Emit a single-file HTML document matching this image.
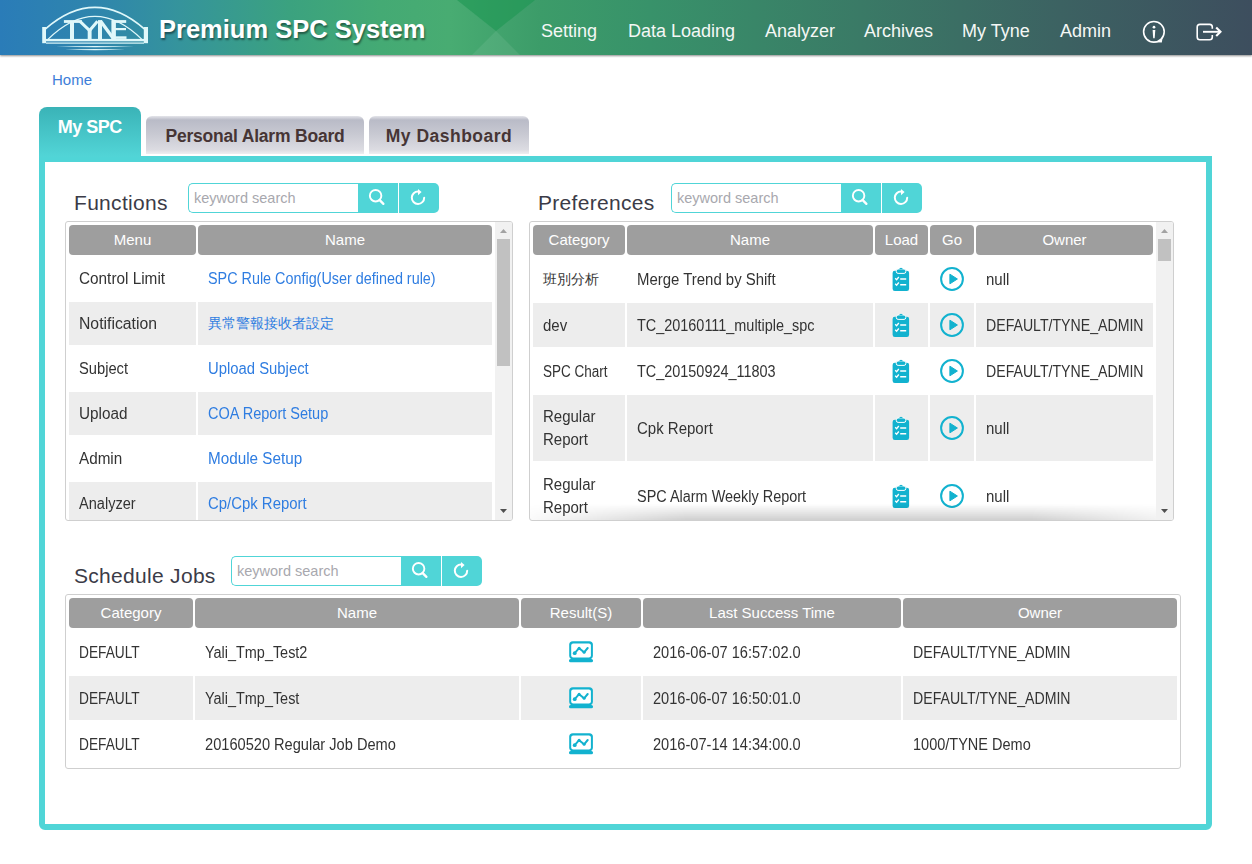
<!DOCTYPE html>
<html><head><meta charset="utf-8">
<style>
*{box-sizing:border-box;margin:0;padding:0}
html,body{width:1252px;height:864px;overflow:hidden;background:#fff;font-family:"Liberation Sans",sans-serif;color:#333}
.abs{position:absolute}
#hdr{position:absolute;left:0;top:0;width:1252px;height:55px;
 background:linear-gradient(90deg,#2a7cb8 0px,#2f86ac 100px,#35949c 180px,#3ba27f 290px,#44aa74 380px,#48ac72 450px,#3c9c69 540px,#38926a 650px,#3a7a66 860px,#3c6262 1060px,#3d4e5e 1252px);
 box-shadow:0 1px 2px rgba(0,0,0,.45)}
.nav{position:absolute;top:20px;font-size:18px;line-height:22px;color:#f4f7f5;white-space:nowrap}
.title{position:absolute;left:159px;top:14px;font-size:25.5px;font-weight:bold;line-height:30px;color:#fff;white-space:nowrap;text-shadow:1px 2px 2px rgba(0,0,0,.45)}
.home{position:absolute;left:52px;top:70px;font-size:15px;line-height:20px;color:#3d7ed8}
.tab1{position:absolute;left:39px;top:107px;width:102px;height:50px;border-radius:8px 8px 0 0;
 background:linear-gradient(180deg,#3ab3b7 0%,#52d5d7 100%);color:#fff;font-weight:bold;font-size:18px;line-height:20px;text-align:center;padding-top:10px;letter-spacing:-.5px;text-indent:-.5px}
.tab2{position:absolute;top:116px;height:38px;border-radius:6px 6px 0 0;
 background:linear-gradient(180deg,#e4e5ea 0px,#b9bbc7 4px,#c8c9d2 18px,#dcdce2 34px,#eeeef1 38px);color:#463535;font-weight:bold;font-size:17.5px;line-height:20px;text-align:center;padding-top:10px;white-space:nowrap;letter-spacing:-.2px}
.frame{position:absolute;left:39px;top:156px;width:1173px;height:674px;border:6px solid #50d5d7;border-radius:0 0 6px 6px}
.sect{position:absolute;font-size:21px;line-height:24px;color:#3b3b47;white-space:nowrap;letter-spacing:.3px}
.sbox{position:absolute;height:30px}
.sbox .inp{position:absolute;left:0;top:0;width:171px;height:30px;border:1px solid #50d5d7;border-right:none;border-radius:5px 0 0 5px;background:#fff;
 font-size:14.5px;line-height:28px;color:#a8a8ae;padding-left:5px;white-space:nowrap}
.sbox .b1{position:absolute;left:170px;top:0;width:40px;height:30px;background:#50d5d7}
.sbox .b2{position:absolute;left:211px;top:0;width:40px;height:30px;background:#50d5d7;border-radius:0 5px 5px 0}
.box{position:absolute;border:1px solid #cfcfcf;border-radius:3px;overflow:hidden;background:#fff}
.th{position:absolute;background:#9e9e9e;border-radius:4px;color:#fff;font-size:15px;line-height:30px;height:30px;text-align:center;white-space:nowrap}
.td{position:absolute;font-size:16px;line-height:23px;color:#333;white-space:nowrap;padding-left:10px;display:flex;align-items:center}
.g{background:#ededed}
.lnk{color:#2f7de1}
.sx{display:inline-block;transform-origin:0 50%}
.track{position:absolute;background:#f1f1f1;width:17px}
.thumb{position:absolute;background:#c1c1c1;width:13px;left:2px}
</style></head><body>
<div id="hdr">
 <svg class="abs" style="left:0;top:0" width="1252" height="55">
  <polygon points="457,0 535,0 496,31" fill="#1a9550" fill-opacity=".55"/>
  <polygon points="496,31 472,55 520,55" fill="#ffffff" fill-opacity=".08"/>
  <g fill="#e0f8fa" stroke="none">
   <path d="M45.5,28.8 Q94.9,-14.2 144.3,28.8" fill="none" stroke="#e0f8fa" stroke-width="1.7"/>
   <path d="M47.9,39.4 Q94.9,-6.6 141.9,39.4" fill="none" stroke="#e0f8fa" stroke-width="1.2"/>
   <rect x="42.2" y="27" width="3.8" height="16.2"/>
   <rect x="143.8" y="27" width="4.2" height="16.2"/>
   <rect x="46" y="38.9" width="98" height="2.4"/>
   <rect x="46" y="42.5" width="98" height="1.2"/>
   <path d="M56,46.6 Q95,45.4 134,46.6 Q95,48 56,46.6Z"/>
   <path d="M65,49.5 Q95,48.4 125,49.5 Q95,50.8 65,49.5Z"/>
   <rect x="63.9" y="20.1" width="18" height="2.8"/>
   <rect x="70" y="22" width="4" height="17"/>
   <path d="M80,21.3 L89.6,30.5 L97.5,21.3" fill="none" stroke="#e0f8fa" stroke-width="3"/>
   <rect x="87.7" y="29.6" width="3.9" height="9.5"/>
   <rect x="98" y="20.1" width="4" height="19"/>
   <path d="M100.5,21 L113,38" fill="none" stroke="#e0f8fa" stroke-width="3.3"/>
   <rect x="111.4" y="20.1" width="4.5" height="19"/>
   <rect x="112" y="20.1" width="14.2" height="2.8"/>
   <rect x="112" y="28" width="14" height="2.2"/>
   <rect x="112" y="36.3" width="14.5" height="2.6"/>
  </g>
  <g fill="none" stroke="#fff" stroke-width="1.6">
   <circle cx="1153.9" cy="31.8" r="10.3"/>
   <path d="M1212.3,28.8 V27.1 Q1212.3,24.4 1209.6,24.4 H1199.9 Q1197.2,24.4 1197.2,27.1 V37 Q1197.2,39.7 1199.9,39.7 H1209.6 Q1212.3,39.7 1212.3,37 V35"/>
   <path d="M1203,31.8 H1219.8" stroke-width="1.9"/>
   <path d="M1216.2,27.5 L1220.5,31.8 L1216.2,36.1" stroke-width="2.1"/>
  </g>
  <g fill="#fff">
   <circle cx="1154" cy="27.2" r="1.35"/>
   <path d="M1152.6,30 H1155.3 L1154.7,38.3 H1153.2Z"/>
   <path d="M1154.5,42.2 Q1160,41.5 1162.6,37.8 L1161.8,42.6 Z"/>
  </g>
 </svg>
 <div class="title">Premium SPC System</div>
 <div class="nav" style="left:541px">Setting</div>
 <div class="nav" style="left:628px">Data Loading</div>
 <div class="nav" style="left:765px">Analyzer</div>
 <div class="nav" style="left:864px">Archives</div>
 <div class="nav" style="left:962px">My Tyne</div>
 <div class="nav" style="left:1060px">Admin</div>
</div>
<div class="home">Home</div>
<div class="frame"></div>
<div class="tab1">My SPC</div>
<div class="tab2" style="left:146px;width:218px">Personal Alarm Board</div>
<div class="tab2" style="left:369px;width:160px;letter-spacing:.5px">My Dashboard</div>
<div class="sect" style="left:74px;top:191px">Functions</div>
<div class="sbox" style="left:188px;top:183px">
 <div class="inp">keyword search</div><div class="b1"></div><div class="b2"></div>
 <svg class="abs" style="left:170px;top:0" width="81" height="30" viewBox="0 0 81 30">
  <circle cx="17.6" cy="12.7" r="5.75" fill="none" stroke="#fff" stroke-width="1.9"/>
  <path d="M21.7,17.1 L25.4,20.9" stroke="#fff" stroke-width="2.3" stroke-linecap="round"/>
  <path d="M66.2,14.7 A6.2,6.2 0 1 1 60.2,8.5" fill="none" stroke="#fff" stroke-width="2" stroke-linecap="round"/>
  <path d="M60,5.9 L63.6,9.1 L60,12.2Z" fill="#fff"/>
 </svg>
</div>
<div class="box" style="left:65px;top:221px;width:448px;height:300px">
<div class="th" style="left:3px;top:3px;width:127px">Menu</div>
<div class="th" style="left:132px;top:3px;width:294px">Name</div>
<div class="td" style="left:3px;top:35px;width:127px;height:43px"><span class="sx" style="transform:scaleX(0.9581)">Control Limit</span></div>
<div class="td" style="left:132px;top:35px;width:294px;height:43px"><span class="lnk"><span class="sx" style="transform:scaleX(0.8981)">SPC Rule Config(User defined rule)</span></span></div>
<div class="td g" style="left:3px;top:80px;width:127px;height:43px"><span class="sx" style="transform:scaleX(0.9844)">Notification</span></div>
<div class="td g" style="left:132px;top:80px;width:294px;height:43px"><span class="lnk" style="font-size:14px">異常警報接收者設定</span></div>
<div class="td" style="left:3px;top:125px;width:127px;height:43px"><span class="sx" style="transform:scaleX(0.9187)">Subject</span></div>
<div class="td" style="left:132px;top:125px;width:294px;height:43px"><span class="lnk"><span class="sx" style="transform:scaleX(0.9281)">Upload Subject</span></span></div>
<div class="td g" style="left:3px;top:170px;width:127px;height:43px"><span class="sx" style="transform:scaleX(0.9563)">Upload</span></div>
<div class="td g" style="left:132px;top:170px;width:294px;height:43px"><span class="lnk"><span class="sx" style="transform:scaleX(0.9075)">COA Report Setup</span></span></div>
<div class="td" style="left:3px;top:215px;width:127px;height:43px"><span class="sx" style="transform:scaleX(0.9534)">Admin</span></div>
<div class="td" style="left:132px;top:215px;width:294px;height:43px"><span class="lnk"><span class="sx" style="transform:scaleX(0.9544)">Module Setup</span></span></div>
<div class="td g" style="left:3px;top:260px;width:127px;height:43px"><span class="sx" style="transform:scaleX(0.9103)">Analyzer</span></div>
<div class="td g" style="left:132px;top:260px;width:294px;height:43px"><span class="lnk"><span class="sx" style="transform:scaleX(0.9319)">Cp/Cpk Report</span></span></div>
<div class="track" style="left:429px;top:0;height:298px"></div>
<div class="thumb" style="left:431px;top:17px;height:127px"></div>
<svg class="abs" style="left:429px;top:0" width="17" height="298"><path d="M5,11 H12 L8.5,7Z" fill="#a3a3a3"/><path d="M5,287 H12 L8.5,291Z" fill="#505050"/></svg>
</div>
<div class="sect" style="left:538px;top:191px">Preferences</div>
<div class="sbox" style="left:671px;top:183px">
 <div class="inp">keyword search</div><div class="b1"></div><div class="b2"></div>
 <svg class="abs" style="left:170px;top:0" width="81" height="30" viewBox="0 0 81 30">
  <circle cx="17.6" cy="12.7" r="5.75" fill="none" stroke="#fff" stroke-width="1.9"/>
  <path d="M21.7,17.1 L25.4,20.9" stroke="#fff" stroke-width="2.3" stroke-linecap="round"/>
  <path d="M66.2,14.7 A6.2,6.2 0 1 1 60.2,8.5" fill="none" stroke="#fff" stroke-width="2" stroke-linecap="round"/>
  <path d="M60,5.9 L63.6,9.1 L60,12.2Z" fill="#fff"/>
 </svg>
</div>
<div class="box" style="left:529px;top:221px;width:645px;height:300px">
<div class="th" style="left:3px;top:3px;width:92px">Category</div>
<div class="th" style="left:97px;top:3px;width:246px">Name</div>
<div class="th" style="left:345px;top:3px;width:53px">Load</div>
<div class="th" style="left:400px;top:3px;width:44px">Go</div>
<div class="th" style="left:446px;top:3px;width:177px">Owner</div>
<div class="td" style="left:3px;top:35px;width:92px;height:44px"><span style="font-size:14px">班別分析</span></div>
<div class="td" style="left:97px;top:35px;width:246px;height:44px"><span class="sx" style="transform:scaleX(0.9337)">Merge Trend by Shift</span></div>
<div class="td" style="left:345px;top:35px;width:53px;height:44px"></div>
<div class="td" style="left:400px;top:35px;width:44px;height:44px"></div>
<div class="td" style="left:446px;top:35px;width:177px;height:44px"><span class="sx" style="transform:scaleX(0.9375)">null</span></div>
<div class="td g" style="left:3px;top:81px;width:92px;height:44px"><span class="sx" style="transform:scaleX(0.9375)">dev</span></div>
<div class="td g" style="left:97px;top:81px;width:246px;height:44px"><span class="sx" style="transform:scaleX(0.9019)">TC_20160111_multiple_spc</span></div>
<div class="td g" style="left:345px;top:81px;width:53px;height:44px"></div>
<div class="td g" style="left:400px;top:81px;width:44px;height:44px"></div>
<div class="td g" style="left:446px;top:81px;width:177px;height:44px"><span class="sx" style="transform:scaleX(0.8831)">DEFAULT/TYNE_ADMIN</span></div>
<div class="td" style="left:3px;top:127px;width:92px;height:44px"><span class="sx" style="transform:scaleX(0.8447)">SPC Chart</span></div>
<div class="td" style="left:97px;top:127px;width:246px;height:44px"><span class="sx" style="transform:scaleX(0.9019)">TC_20150924_11803</span></div>
<div class="td" style="left:345px;top:127px;width:53px;height:44px"></div>
<div class="td" style="left:400px;top:127px;width:44px;height:44px"></div>
<div class="td" style="left:446px;top:127px;width:177px;height:44px"><span class="sx" style="transform:scaleX(0.8831)">DEFAULT/TYNE_ADMIN</span></div>
<div class="td g" style="left:3px;top:173px;width:92px;height:66px"><span class="sx" style="transform:scaleX(0.9375)">Regular<br>Report</span></div>
<div class="td g" style="left:97px;top:173px;width:246px;height:66px"><span class="sx" style="transform:scaleX(0.9375)">Cpk Report</span></div>
<div class="td g" style="left:345px;top:173px;width:53px;height:66px"></div>
<div class="td g" style="left:400px;top:173px;width:44px;height:66px"></div>
<div class="td g" style="left:446px;top:173px;width:177px;height:66px"><span class="sx" style="transform:scaleX(0.9375)">null</span></div>
<div class="td" style="left:3px;top:241px;width:92px;height:66px"><span class="sx" style="transform:scaleX(0.9375)">Regular<br>Report</span></div>
<div class="td" style="left:97px;top:241px;width:246px;height:66px"><span class="sx" style="transform:scaleX(0.9028)">SPC Alarm Weekly Report</span></div>
<div class="td" style="left:345px;top:241px;width:53px;height:66px"></div>
<div class="td" style="left:400px;top:241px;width:44px;height:66px"></div>
<div class="td" style="left:446px;top:241px;width:177px;height:66px"><span class="sx" style="transform:scaleX(0.9375)">null</span></div>
<div class="track" style="left:626px;top:0;height:298px"></div>
<div class="thumb" style="left:628px;top:17px;height:22px"></div>
<svg class="abs" style="left:626px;top:0" width="17" height="298"><path d="M5,11 H12 L8.5,7Z" fill="#a3a3a3"/><path d="M5,287 H12 L8.5,291Z" fill="#505050"/></svg>
</div>
<svg class="abs" style="left:892px;top:266.0px" width="18" height="26" viewBox="0 0 18 26">
<rect x="0.6" y="4.8" width="16.5" height="20.1" rx="2.2" fill="#12b2cf"/>
<rect x="4.3" y="3" width="9.5" height="4.4" rx="1.8" fill="#12b2cf" stroke="#fff" stroke-width="1"/>
<path d="M6.8,3.2 Q9,0.2 11.2,3.2Z" fill="#12b2cf"/>
<path d="M3.2,12.3 L4.6,13.7 L6.8,11 M3.2,17.8 L4.6,19.2 L6.8,16.5" fill="none" stroke="#fff" stroke-width="1.3"/>
<path d="M8.2,13.1 H14.2 M8.2,18.8 H14.2" fill="none" stroke="#fff" stroke-width="1.5"/>
</svg>
<svg class="abs" style="left:939px;top:266.0px" width="26" height="26" viewBox="0 0 26 26">
<circle cx="13" cy="13" r="10.9" fill="none" stroke="#12b2cf" stroke-width="2"/>
<path d="M10.9,8.2 L10.9,17.8 L18.4,13Z" fill="#12b2cf" stroke="#12b2cf" stroke-width="1" stroke-linejoin="round"/>
</svg>
<svg class="abs" style="left:892px;top:312.0px" width="18" height="26" viewBox="0 0 18 26">
<rect x="0.6" y="4.8" width="16.5" height="20.1" rx="2.2" fill="#12b2cf"/>
<rect x="4.3" y="3" width="9.5" height="4.4" rx="1.8" fill="#12b2cf" stroke="#fff" stroke-width="1"/>
<path d="M6.8,3.2 Q9,0.2 11.2,3.2Z" fill="#12b2cf"/>
<path d="M3.2,12.3 L4.6,13.7 L6.8,11 M3.2,17.8 L4.6,19.2 L6.8,16.5" fill="none" stroke="#fff" stroke-width="1.3"/>
<path d="M8.2,13.1 H14.2 M8.2,18.8 H14.2" fill="none" stroke="#fff" stroke-width="1.5"/>
</svg>
<svg class="abs" style="left:939px;top:312.0px" width="26" height="26" viewBox="0 0 26 26">
<circle cx="13" cy="13" r="10.9" fill="none" stroke="#12b2cf" stroke-width="2"/>
<path d="M10.9,8.2 L10.9,17.8 L18.4,13Z" fill="#12b2cf" stroke="#12b2cf" stroke-width="1" stroke-linejoin="round"/>
</svg>
<svg class="abs" style="left:892px;top:358.0px" width="18" height="26" viewBox="0 0 18 26">
<rect x="0.6" y="4.8" width="16.5" height="20.1" rx="2.2" fill="#12b2cf"/>
<rect x="4.3" y="3" width="9.5" height="4.4" rx="1.8" fill="#12b2cf" stroke="#fff" stroke-width="1"/>
<path d="M6.8,3.2 Q9,0.2 11.2,3.2Z" fill="#12b2cf"/>
<path d="M3.2,12.3 L4.6,13.7 L6.8,11 M3.2,17.8 L4.6,19.2 L6.8,16.5" fill="none" stroke="#fff" stroke-width="1.3"/>
<path d="M8.2,13.1 H14.2 M8.2,18.8 H14.2" fill="none" stroke="#fff" stroke-width="1.5"/>
</svg>
<svg class="abs" style="left:939px;top:358.0px" width="26" height="26" viewBox="0 0 26 26">
<circle cx="13" cy="13" r="10.9" fill="none" stroke="#12b2cf" stroke-width="2"/>
<path d="M10.9,8.2 L10.9,17.8 L18.4,13Z" fill="#12b2cf" stroke="#12b2cf" stroke-width="1" stroke-linejoin="round"/>
</svg>
<svg class="abs" style="left:892px;top:415.0px" width="18" height="26" viewBox="0 0 18 26">
<rect x="0.6" y="4.8" width="16.5" height="20.1" rx="2.2" fill="#12b2cf"/>
<rect x="4.3" y="3" width="9.5" height="4.4" rx="1.8" fill="#12b2cf" stroke="#fff" stroke-width="1"/>
<path d="M6.8,3.2 Q9,0.2 11.2,3.2Z" fill="#12b2cf"/>
<path d="M3.2,12.3 L4.6,13.7 L6.8,11 M3.2,17.8 L4.6,19.2 L6.8,16.5" fill="none" stroke="#fff" stroke-width="1.3"/>
<path d="M8.2,13.1 H14.2 M8.2,18.8 H14.2" fill="none" stroke="#fff" stroke-width="1.5"/>
</svg>
<svg class="abs" style="left:939px;top:415.0px" width="26" height="26" viewBox="0 0 26 26">
<circle cx="13" cy="13" r="10.9" fill="none" stroke="#12b2cf" stroke-width="2"/>
<path d="M10.9,8.2 L10.9,17.8 L18.4,13Z" fill="#12b2cf" stroke="#12b2cf" stroke-width="1" stroke-linejoin="round"/>
</svg>
<svg class="abs" style="left:892px;top:483.0px" width="18" height="26" viewBox="0 0 18 26">
<rect x="0.6" y="4.8" width="16.5" height="20.1" rx="2.2" fill="#12b2cf"/>
<rect x="4.3" y="3" width="9.5" height="4.4" rx="1.8" fill="#12b2cf" stroke="#fff" stroke-width="1"/>
<path d="M6.8,3.2 Q9,0.2 11.2,3.2Z" fill="#12b2cf"/>
<path d="M3.2,12.3 L4.6,13.7 L6.8,11 M3.2,17.8 L4.6,19.2 L6.8,16.5" fill="none" stroke="#fff" stroke-width="1.3"/>
<path d="M8.2,13.1 H14.2 M8.2,18.8 H14.2" fill="none" stroke="#fff" stroke-width="1.5"/>
</svg>
<svg class="abs" style="left:939px;top:483.0px" width="26" height="26" viewBox="0 0 26 26">
<circle cx="13" cy="13" r="10.9" fill="none" stroke="#12b2cf" stroke-width="2"/>
<path d="M10.9,8.2 L10.9,17.8 L18.4,13Z" fill="#12b2cf" stroke="#12b2cf" stroke-width="1" stroke-linejoin="round"/>
</svg>
<div class="abs" style="left:530px;top:504px;width:626px;height:16px;background:linear-gradient(180deg,rgba(0,0,0,0),rgba(0,0,0,.19));-webkit-mask-image:linear-gradient(90deg,rgba(0,0,0,.1),#000 25%,#000 80%,rgba(0,0,0,.3))"></div>
<div class="sect" style="left:74px;top:564px">Schedule Jobs</div>
<div class="sbox" style="left:231px;top:556px">
 <div class="inp">keyword search</div><div class="b1"></div><div class="b2"></div>
 <svg class="abs" style="left:170px;top:0" width="81" height="30" viewBox="0 0 81 30">
  <circle cx="17.6" cy="12.7" r="5.75" fill="none" stroke="#fff" stroke-width="1.9"/>
  <path d="M21.7,17.1 L25.4,20.9" stroke="#fff" stroke-width="2.3" stroke-linecap="round"/>
  <path d="M66.2,14.7 A6.2,6.2 0 1 1 60.2,8.5" fill="none" stroke="#fff" stroke-width="2" stroke-linecap="round"/>
  <path d="M60,5.9 L63.6,9.1 L60,12.2Z" fill="#fff"/>
 </svg>
</div>
<div class="box" style="left:65px;top:594px;width:1116px;height:175px">
<div class="th" style="left:3px;top:3px;width:124px">Category</div>
<div class="th" style="left:129px;top:3px;width:324px">Name</div>
<div class="th" style="left:455px;top:3px;width:120px">Result(S)</div>
<div class="th" style="left:577px;top:3px;width:258px">Last Success Time</div>
<div class="th" style="left:837px;top:3px;width:274px">Owner</div>
<div class="td" style="left:3px;top:35px;width:124px;height:44px"><span class="sx" style="transform:scaleX(0.8569)">DEFAULT</span></div>
<div class="td" style="left:129px;top:35px;width:324px;height:44px"><span class="sx" style="transform:scaleX(0.9019)">Yali_Tmp_Test2</span></div>
<div class="td" style="left:455px;top:35px;width:120px;height:44px"></div>
<div class="td" style="left:577px;top:35px;width:258px;height:44px"><span class="sx" style="transform:scaleX(0.9122)">2016-06-07 16:57:02.0</span></div>
<div class="td" style="left:837px;top:35px;width:274px;height:44px"><span class="sx" style="transform:scaleX(0.8831)">DEFAULT/TYNE_ADMIN</span></div>
<div class="td g" style="left:3px;top:81px;width:124px;height:44px"><span class="sx" style="transform:scaleX(0.8569)">DEFAULT</span></div>
<div class="td g" style="left:129px;top:81px;width:324px;height:44px"><span class="sx" style="transform:scaleX(0.9019)">Yali_Tmp_Test</span></div>
<div class="td g" style="left:455px;top:81px;width:120px;height:44px"></div>
<div class="td g" style="left:577px;top:81px;width:258px;height:44px"><span class="sx" style="transform:scaleX(0.9122)">2016-06-07 16:50:01.0</span></div>
<div class="td g" style="left:837px;top:81px;width:274px;height:44px"><span class="sx" style="transform:scaleX(0.8831)">DEFAULT/TYNE_ADMIN</span></div>
<div class="td" style="left:3px;top:127px;width:124px;height:44px"><span class="sx" style="transform:scaleX(0.8569)">DEFAULT</span></div>
<div class="td" style="left:129px;top:127px;width:324px;height:44px"><span class="sx" style="transform:scaleX(0.9131)">20160520 Regular Job Demo</span></div>
<div class="td" style="left:455px;top:127px;width:120px;height:44px"></div>
<div class="td" style="left:577px;top:127px;width:258px;height:44px"><span class="sx" style="transform:scaleX(0.9122)">2016-07-14 14:34:00.0</span></div>
<div class="td" style="left:837px;top:127px;width:274px;height:44px"><span class="sx" style="transform:scaleX(0.9066)">1000/TYNE Demo</span></div>
</div>
<svg class="abs" style="left:568px;top:639px" width="26" height="26" viewBox="0 0 26 26">
<rect x="1.2" y="2.2" width="23.7" height="17.8" rx="3.6" fill="#12b2cf"/>
<rect x="3.2" y="4.4" width="19.7" height="14.2" rx="2" fill="#fff"/>
<rect x="1" y="20" width="24" height="3.3" rx="1.6" fill="#12b2cf"/>
<polyline points="6.7,14.2 11.1,9.2 16.1,13.3 19.7,9" fill="none" stroke="#12b2cf" stroke-width="2" stroke-linejoin="round" stroke-linecap="round"/>
<circle cx="6.7" cy="14.2" r="1.9" fill="#12b2cf"/>
<circle cx="11.1" cy="9.2" r="1.5" fill="#12b2cf"/>
<circle cx="16.1" cy="13.3" r="1.5" fill="#12b2cf"/>
</svg>
<svg class="abs" style="left:568px;top:685px" width="26" height="26" viewBox="0 0 26 26">
<rect x="1.2" y="2.2" width="23.7" height="17.8" rx="3.6" fill="#12b2cf"/>
<rect x="3.2" y="4.4" width="19.7" height="14.2" rx="2" fill="#fff"/>
<rect x="1" y="20" width="24" height="3.3" rx="1.6" fill="#12b2cf"/>
<polyline points="6.7,14.2 11.1,9.2 16.1,13.3 19.7,9" fill="none" stroke="#12b2cf" stroke-width="2" stroke-linejoin="round" stroke-linecap="round"/>
<circle cx="6.7" cy="14.2" r="1.9" fill="#12b2cf"/>
<circle cx="11.1" cy="9.2" r="1.5" fill="#12b2cf"/>
<circle cx="16.1" cy="13.3" r="1.5" fill="#12b2cf"/>
</svg>
<svg class="abs" style="left:568px;top:731px" width="26" height="26" viewBox="0 0 26 26">
<rect x="1.2" y="2.2" width="23.7" height="17.8" rx="3.6" fill="#12b2cf"/>
<rect x="3.2" y="4.4" width="19.7" height="14.2" rx="2" fill="#fff"/>
<rect x="1" y="20" width="24" height="3.3" rx="1.6" fill="#12b2cf"/>
<polyline points="6.7,14.2 11.1,9.2 16.1,13.3 19.7,9" fill="none" stroke="#12b2cf" stroke-width="2" stroke-linejoin="round" stroke-linecap="round"/>
<circle cx="6.7" cy="14.2" r="1.9" fill="#12b2cf"/>
<circle cx="11.1" cy="9.2" r="1.5" fill="#12b2cf"/>
<circle cx="16.1" cy="13.3" r="1.5" fill="#12b2cf"/>
</svg>
</body></html>
